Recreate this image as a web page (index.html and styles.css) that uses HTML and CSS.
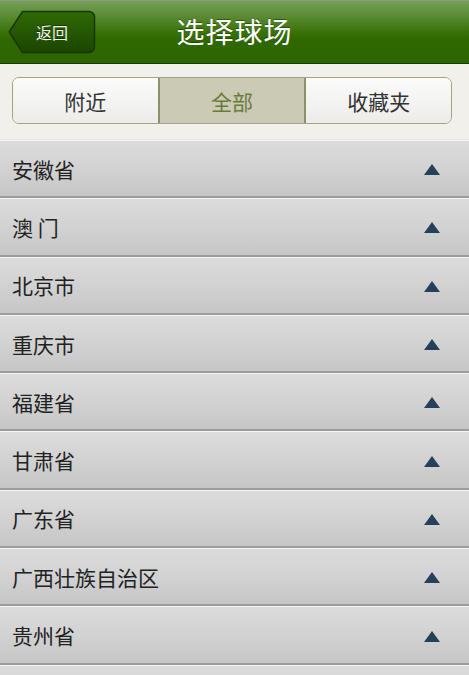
FILE: index.html
```html
<!DOCTYPE html>
<html lang="zh">
<head>
<meta charset="utf-8">
<title>选择球场</title>
<link rel="stylesheet" href="styles.css">
</head>
<body>
<div class="app">
  <header class="navbar">
    <button class="back">
      <svg class="back-shape" width="88" height="44" viewBox="0 0 88 44">
        <defs>
          <linearGradient id="bg" x1="0" y1="0" x2="0" y2="1">
            <stop offset="0" stop-color="#2f6a05"/>
            <stop offset="1" stop-color="#1c4500"/>
          </linearGradient>
        </defs>
        <path d="M14.5 1.5 H81 a5.5 5.5 0 0 1 5.5 5.5 V37 a5.5 5.5 0 0 1 -5.5 5.5 H14.5 L1.2 22 Z" fill="url(#bg)" stroke="#173800" stroke-width="1.5" stroke-linejoin="round"/>
      </svg>
      <span class="back-label">返回</span>
    </button>
    <h1 class="title">选择球场</h1>
  </header>
  <div class="tabs-wrap">
    <div class="tabs">
      <div class="tab">附近</div>
      <div class="tab active">全部</div>
      <div class="tab">收藏夹</div>
    </div>
  </div>
  <ul class="list">
    <li class="row"><span>安徽省</span><i class="tri"></i></li>
    <li class="row"><span>澳 门</span><i class="tri"></i></li>
    <li class="row"><span>北京市</span><i class="tri"></i></li>
    <li class="row"><span>重庆市</span><i class="tri"></i></li>
    <li class="row"><span>福建省</span><i class="tri"></i></li>
    <li class="row"><span>甘肃省</span><i class="tri"></i></li>
    <li class="row"><span>广东省</span><i class="tri"></i></li>
    <li class="row"><span>广西壮族自治区</span><i class="tri"></i></li>
    <li class="row"><span>贵州省</span><i class="tri"></i></li>
    <li class="row"></li>
  </ul>
</div>
</body>
</html>
```
FILE: styles.css
```css
* { box-sizing: border-box; }
html, body { margin: 0; padding: 0; }
body {
  width: 469px;
  height: 675px;
  overflow: hidden;
  background: #f2f0eb;
  font-family: "Noto Sans CJK SC", "Noto Sans", sans-serif;
}
.app { display: flex; flex-direction: column; }
.navbar {
  position: relative;
  height: 64px;
  display: flex;
  align-items: center;
  justify-content: center;
  border-top: 1px solid #8c9a84;
  border-bottom: 1px solid #1c3b00;
  background: linear-gradient(to bottom, #74a055 0%, #5a8a34 25%, #3a7208 50%, #2f6900 60%, #2d6500 100%);
}
.back {
  position: absolute;
  left: 8px;
  top: 9px;
  width: 88px;
  height: 44px;
  padding: 0;
  border: 0;
  background: none;
  display: flex;
  align-items: center;
  justify-content: center;
}
.back-shape { position: absolute; left: 0; top: 0; }
.back-label {
  position: relative;
  margin-left: 0;
  color: #f4f4ec;
  font-size: 16px;
  font-family: "Noto Sans CJK SC", sans-serif;
  text-shadow: 0 -1px 0 rgba(0,0,0,0.4);
}
.title {
  margin: 0 0 2px 0;
  color: #fff;
  font-size: 28px;
  font-weight: 400;
  letter-spacing: 1px;
  text-shadow: 0 -1px 0 rgba(0,0,0,0.35);
}
.tabs-wrap {
  height: 75px;
  padding: 13px 17px 0 12px;
  background: #f2f0eb;
}
.tabs {
  display: flex;
  height: 47px;
  border: 1px solid #a3a57e;
  border-radius: 7px;
  overflow: hidden;
}
.tab {
  flex: 1;
  display: flex;
  align-items: center;
  justify-content: center;
  font-size: 21px;
  color: #333;
  background: linear-gradient(to bottom, #fbfbfb 0%, #ececea 100%);
}
.tab + .tab { border-left: 2px solid #8d9068; }
.tab.active {
  background: #cbcab5;
  color: #6a7a3a;
}
.list {
  list-style: none;
  margin: 0;
  padding: 0;
  border-top: 1px solid #e6e6e6;
}
.row {
  height: 58.3px;
  display: flex;
  align-items: center;
  justify-content: space-between;
  padding: 0 29px 0 12px;
  font-size: 21px;
  color: #222;
  background: linear-gradient(to bottom, #dcdcdc 0%, #d2d2d2 50%, #c6c6c6 100%);
  border-top: 1px solid #f4f4f4;
  border-bottom: 2px solid #9c9c9c;
}
.tri {
  width: 0;
  height: 0;
  border-left: 8.5px solid transparent;
  border-right: 8.5px solid transparent;
  border-bottom: 11px solid #263f5c;
  margin-top: 2px;
}
```
